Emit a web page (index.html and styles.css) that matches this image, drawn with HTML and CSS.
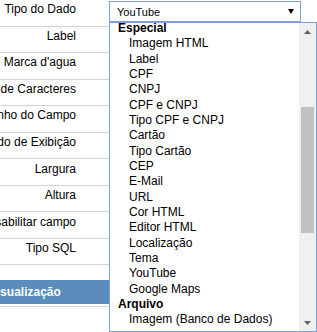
FILE: index.html
```html
<!DOCTYPE html>
<html lang="pt-BR">
<head>
<meta charset="UTF-8">
<title>Campo</title>
<link rel="stylesheet" href="styles.css">
</head>
<body>
<div class="form">
    <div class="row">
        <div class="lbl">Tipo do Dado</div>
        <div class="select">
            <span>YouTube</span>
            <svg width="6" height="5" viewBox="0 0 6 5"><polygon points="0,0 6,0 3,5" fill="#000"/></svg>
        </div>
    </div>
    <div class="row"><div class="lbl">Label</div></div>
    <div class="row"><div class="lbl">Marca d'agua</div></div>
    <div class="row"><div class="lbl">Quantidade de Caracteres</div></div>
    <div class="row"><div class="lbl">Tamanho do Campo</div></div>
    <div class="row"><div class="lbl">Modo de Exibição</div></div>
    <div class="row"><div class="lbl">Largura</div></div>
    <div class="row"><div class="lbl">Altura</div></div>
    <div class="row"><div class="lbl">Desabilitar campo</div></div>
    <div class="row"><div class="lbl">Tipo SQL</div></div>

    <div class="section">Visualização</div>
    <div class="rule"></div>
</div>

<!-- lista aberta do select -->
<div class="dropdown">
    <ul class="options">
        <li class="group">Especial</li>
        <li>Imagem HTML</li>
        <li>Label</li>
        <li>CPF</li>
        <li>CNPJ</li>
        <li>CPF e CNPJ</li>
        <li>Tipo CPF e CNPJ</li>
        <li>Cartão</li>
        <li>Tipo Cartão</li>
        <li>CEP</li>
        <li>E-Mail</li>
        <li>URL</li>
        <li>Cor HTML</li>
        <li>Editor HTML</li>
        <li>Localização</li>
        <li>Tema</li>
        <li>YouTube</li>
        <li>Google Maps</li>
        <li class="group">Arquivo</li>
        <li>Imagem (Banco de Dados)</li>
    </ul>
    <div class="scrollbar">
        <div class="sb-btn">
            <svg width="7" height="4" viewBox="0 0 7 4"><polygon points="0,4 7,4 3.5,0" fill="#606060"/></svg>
        </div>
        <div class="sb-thumb"></div>
        <div class="sb-btn down">
            <svg width="7" height="4" viewBox="0 0 7 4"><polygon points="0,0 7,0 3.5,4" fill="#606060"/></svg>
        </div>
    </div>
</div>
</body>
</html>
```

FILE: styles.css
```css
body {
    margin: 0;
    font-family: "Liberation Sans", Arial, sans-serif;
    font-size: 12px;
    color: #000;
    background-color: #fff;
    overflow: hidden;
}

.form {
    margin-left: -16px;
}
.row {
    display: flex;
    height: 26.55px;
    box-sizing: border-box;
    border-bottom: 1px solid #d3d3d3;
}
.lbl {
    width: 96px;
    box-sizing: border-box;
    padding: 2.3px 4px 0 0;
    line-height: 14px;
    display: flex;
    justify-content: flex-end;
    white-space: nowrap;
}

.select {
    margin: 1px 0 0 29px;
    width: 192px;
    height: 21px;
    box-sizing: border-box;
    border: 1px solid #7f9fd8;
    background-color: #fff;
    display: flex;
    align-items: center;
    justify-content: space-between;
    padding: 1px 6px 0 7px;
    font-size: 11px;
}
.select svg {
    margin-top: -2px;
}

.section {
    margin-top: 14.5px;
    height: 24px;
    line-height: 24px;
    padding-left: 5px;
    background-color: #5a8dbb;
    color: #fff;
    font-weight: bold;
    white-space: nowrap;
}
.rule {
    margin-top: 2px;
    border-top: 1px solid #d3d3d3;
}

.dropdown {
    position: absolute;
    left: 109px;
    top: 22px;
    width: 208px;
    height: 310px;
    box-sizing: border-box;
    border: 1px solid #7f9fd8;
    background-color: #fff;
    display: flex;
    overflow: hidden;
}
.options {
    flex: 1;
    margin: -2px 0 0;
    padding: 0;
    list-style: none;
    line-height: 15.33px;
    overflow: hidden;
}
.options li {
    padding-left: 19px;
    white-space: nowrap;
}
.options .group {
    padding-left: 8px;
    font-weight: bold;
}

.scrollbar {
    width: 17px;
    background-color: #f0f0f0;
    display: flex;
    flex-direction: column;
}
.sb-btn {
    height: 17px;
    display: flex;
    align-items: center;
    justify-content: center;
}
.sb-btn.down {
    margin-top: auto;
}
.sb-thumb {
    margin: 67px 0 0 2px;
    width: 13px;
    height: 126px;
    background-color: #c1c1c1;
}
```
